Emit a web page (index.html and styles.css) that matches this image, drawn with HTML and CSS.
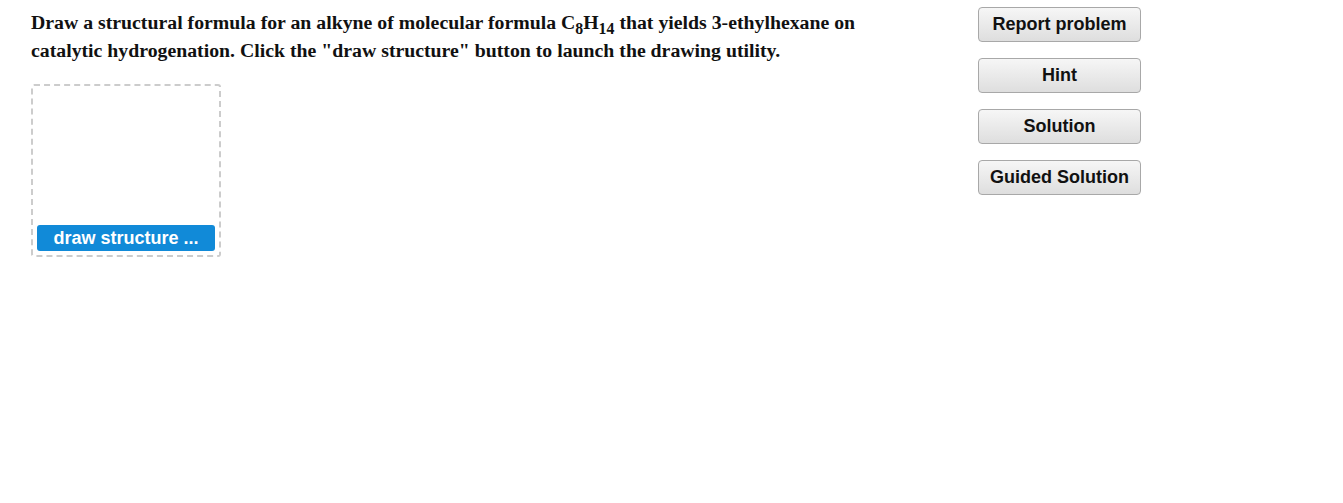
FILE: index.html
```html
<!DOCTYPE html>
<html>
<head>
<meta charset="utf-8">
<link rel="stylesheet" href="styles.css">
</head>
<body>
<div class="page">
  <div class="question">
    <p class="prompt">Draw a structural formula for an alkyne of molecular formula C<sub>8</sub>H<sub>14</sub> that yields 3-ethylhexane on catalytic hydrogenation. Click the "draw structure" button to launch the drawing utility.</p>
    <div class="drawbox">
      <button class="draw-btn">draw structure ...</button>
    </div>
  </div>
  <div class="side">
    <button class="side-btn">Report problem</button>
    <button class="side-btn">Hint</button>
    <button class="side-btn">Solution</button>
    <button class="side-btn">Guided Solution</button>
  </div>
</div>
</body>
</html>
```
FILE: styles.css
```css
html, body {
  margin: 0;
  padding: 0;
  background: #fff;
}
.page {
  display: flex;
  padding: 7px 0 0 31px;
}
.question {
  width: 947px;
}
.prompt {
  width: 880px;
  margin: 1px 0 0 0;
  font-family: "Liberation Serif", "Times New Roman", serif;
  font-weight: bold;
  font-size: 19.8px;
  line-height: 28px;
  color: #111;
}
.prompt sub {
  font-size: 0.8em;
  line-height: 0;
  vertical-align: -0.3em;
}
.drawbox {
  margin-top: 20px;
  width: 186px;
  height: 165px;
  border: 2px dashed #cccccc;
  border-radius: 3px;
  display: flex;
  align-items: flex-end;
  justify-content: center;
  padding-bottom: 4px;
  box-sizing: content-box;
}
.draw-btn {
  width: 178px;
  height: 26px;
  border: none;
  border-radius: 3px;
  background: #118ad8;
  color: #fff;
  font-family: "Liberation Sans", Arial, sans-serif;
  font-weight: bold;
  font-size: 18px;
  line-height: 26px;
  padding: 0;
}
.side {
  display: flex;
  flex-direction: column;
  gap: 16px;
}
.side-btn {
  width: 163px;
  height: 35px;
  border: 1px solid #a8a8a8;
  border-radius: 4px;
  background: linear-gradient(#f6f6f6, #dedede);
  color: #111;
  font-family: "Liberation Sans", Arial, sans-serif;
  font-weight: bold;
  font-size: 18px;
  padding: 0;
}
```
